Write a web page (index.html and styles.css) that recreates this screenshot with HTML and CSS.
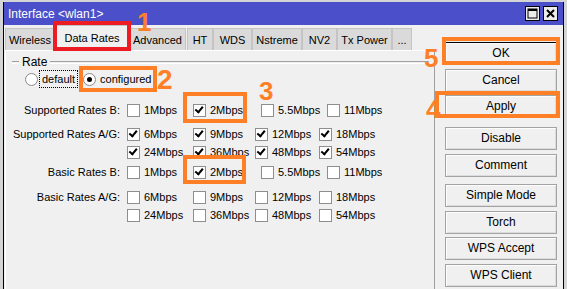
FILE: index.html
```html
<!DOCTYPE html>
<html>
  <head>
    <meta charset="UTF-8">
    <title>Interface &lt;wlan1&gt;</title>
    <link rel="stylesheet" href="styles.css">
  </head>
  <body>
    <div class="window">
      <div class="titlebar">
        <span class="title">Interface &lt;wlan1&gt;</span>
        <div class="tb-btns">
          <span class="tb-btn">
            <svg width="11" height="11" viewBox="0 0 11 11"><rect x="1" y="1" width="9" height="9" fill="none" stroke="#000" stroke-width="1"/><rect x="1" y="1" width="9" height="2" fill="#000"/></svg>
          </span>
          <span class="tb-btn">
            <svg width="11" height="11" viewBox="0 0 11 11"><path d="M2 2 L9 9 M9 2 L2 9" stroke="#000" stroke-width="2"/></svg>
          </span>
        </div>
      </div>
      <div class="main">
        <div class="left">
          <div class="tabs">
            <div class="tab t-wireless">Wireless</div>
            <div class="tab active">Data Rates</div>
            <div class="tab t-adv">Advanced</div>
            <div class="tab t-ht">HT</div>
            <div class="tab t-wds">WDS</div>
            <div class="tab t-nst">Nstreme</div>
            <div class="tab t-nv2">NV2</div>
            <div class="tab t-tx">Tx Power</div>
            <div class="tab t-more">...</div>
          </div>
          <div class="panel">
            <div class="group-title"><span>Rate</span></div>
            <div class="radios">
              <label class="radio r-default"><span class="dot"></span><span class="rtext focus">default</span></label>
              <label class="radio"><span class="dot on"></span><span class="rtext">configured</span></label>
            </div>
            <div class="rates">
              <div class="row gap-b">
                <span class="lbl">Supported Rates B:</span>
                <div class="opts cols-b">
                  <span class="cb"><span class="box"></span>1Mbps</span>
                  <span class="cb"><span class="box on"></span>2Mbps</span>
                  <span class="cb"><span class="box"></span>5.5Mbps</span>
                  <span class="cb"><span class="box"></span>11Mbps</span>
                </div>
              </div>
              <div class="row gap-ag">
                <span class="lbl">Supported Rates A/G:</span>
                <div class="opts cols-ag">
                  <span class="cb"><span class="box on"></span>6Mbps</span>
                  <span class="cb"><span class="box on"></span>9Mbps</span>
                  <span class="cb"><span class="box on"></span>12Mbps</span>
                  <span class="cb"><span class="box on"></span>18Mbps</span>
                  <span class="cb"><span class="box on"></span>24Mbps</span>
                  <span class="cb"><span class="box on"></span>36Mbps</span>
                  <span class="cb"><span class="box on"></span>48Mbps</span>
                  <span class="cb"><span class="box on"></span>54Mbps</span>
                </div>
              </div>
              <div class="row gap-basic">
                <span class="lbl">Basic Rates B:</span>
                <div class="opts cols-b">
                  <span class="cb"><span class="box"></span>1Mbps</span>
                  <span class="cb"><span class="box on"></span>2Mbps</span>
                  <span class="cb"><span class="box"></span>5.5Mbps</span>
                  <span class="cb"><span class="box"></span>11Mbps</span>
                </div>
              </div>
              <div class="row">
                <span class="lbl">Basic Rates A/G:</span>
                <div class="opts cols-ag">
                  <span class="cb"><span class="box"></span>6Mbps</span>
                  <span class="cb"><span class="box"></span>9Mbps</span>
                  <span class="cb"><span class="box"></span>12Mbps</span>
                  <span class="cb"><span class="box"></span>18Mbps</span>
                  <span class="cb"><span class="box"></span>24Mbps</span>
                  <span class="cb"><span class="box"></span>36Mbps</span>
                  <span class="cb"><span class="box"></span>48Mbps</span>
                  <span class="cb"><span class="box"></span>54Mbps</span>
                </div>
              </div>
            </div>
          </div>
        </div>
        <div class="side">
          <div class="btn default">OK</div>
          <div class="btn">Cancel</div>
          <div class="btn">Apply</div>
          <div class="btn sep-1">Disable</div>
          <div class="btn">Comment</div>
          <div class="btn sep-2">Simple Mode</div>
          <div class="btn">Torch</div>
          <div class="btn">WPS Accept</div>
          <div class="btn">WPS Client</div>
          <div class="btn"></div>
        </div>
      </div>
    </div>

    <!-- annotations drawn over the screenshot -->
    <div class="mark red m-tab"></div>
    <div class="num n1">1</div>
    <div class="mark m-conf"></div>
    <div class="num n2">2</div>
    <div class="num n3">3</div>
    <div class="mark m-sup2"></div>
    <div class="mark m-bas2"></div>
    <div class="num n4">4</div>
    <div class="mark m-apply"></div>
    <div class="num n5">5</div>
    <div class="mark m-ok"></div>
  </body>
</html>
```

FILE: styles.css
```css
body {
  margin: 0;
  background: #d4d4d4;
  font-family: "Liberation Sans", Arial, sans-serif;
  font-size: 11px;
  color: #000;
  position: relative;
  height: 289px;
  overflow: hidden;
}
.window {
  margin: 2px 0 0 3px;
  width: 559px;
  height: 300px;
  border-left: 1px solid #000;
  border-right: 1px solid #000;
  background: #f0f0f0;
}
.titlebar {
  height: 23px;
  background: #4b4fc9;
  display: flex;
  align-items: center;
  justify-content: space-between;
  padding: 0 5px 0 4px;
}
.title {
  color: #fff;
  font-size: 12px;
}
.tb-btns {
  display: flex;
  gap: 3px;
}
.tb-btn {
  width: 13px;
  height: 13px;
  border: 1px solid #000;
  background: #ececec;
  display: flex;
  align-items: center;
  justify-content: center;
}
.main {
  display: flex;
}
.left {
  width: 431px;
}
.tabs {
  display: flex;
  align-items: flex-end;
  height: 25px;
  padding-left: 1px;
}
.tab {
  height: 22px;
  line-height: 22px;
  background: #dadada;
  border: 1px solid #c4c4c4;
  border-bottom: none;
  text-align: center;
  box-sizing: border-box;
}
.tab.active {
  background: #f0f0f0;
  height: 26px;
  line-height: 24px;
  width: 74px;
  margin-bottom: -1px;
}
.t-wireless { width: 50px; }
.t-adv { width: 57px; }
.t-ht { width: 26px; margin-left: 1px; }
.t-wds { width: 39px; }
.t-nst { width: 50px; }
.t-nv2 { width: 35px; }
.t-tx { width: 55px; }
.t-more { width: 20px; }
.panel {
  margin-left: 1px;
  height: 260px;
  border-top: 1px solid #fff;
  border-left: 1px solid #fff;
  border-right: 1px solid #a0a0a0;
  padding-top: 5px;
  box-sizing: border-box;
}
.group-title {
  display: flex;
  align-items: center;
  height: 12px;
  margin: 0 5px 0 6px;
}
.group-title::before,
.group-title::after {
  content: "";
  height: 1px;
  border-top: 1px solid #a0a0a0;
  border-bottom: 1px solid #fff;
}
.group-title::before {
  width: 7px;
}
.group-title::after {
  flex: 1;
}
.group-title span {
  padding: 0 3px 0 3px;
  font-size: 12px;
}
.radios {
  display: flex;
  align-items: center;
  height: 20px;
  margin-top: 1px;
  padding-left: 19px;
}
.radio {
  display: flex;
  align-items: center;
}
.r-default {
  margin-right: 5px;
}
.dot {
  width: 11px;
  height: 11px;
  border: 1px solid #8a8a8a;
  border-radius: 50%;
  background: #fff;
  position: relative;
}
.dot.on::after {
  content: "";
  position: absolute;
  left: 3px;
  top: 3px;
  width: 5px;
  height: 5px;
  border-radius: 50%;
  background: #000;
}
.rtext {
  padding: 2px 2px;
  margin-left: 1px;
  border: 1px solid transparent;
}
.rtext.focus {
  border: 1px dotted #000;
}
.rates {
  margin-top: 12px;
}
.row {
  display: flex;
}
.gap-b { margin-bottom: 6px; }
.gap-ag { margin-bottom: 2px; }
.gap-basic { margin-bottom: 7px; }
.lbl {
  width: 114px;
  text-align: right;
  line-height: 18px;
}
.opts {
  display: grid;
  grid-auto-rows: 18px;
  margin-left: 7px;
}
.cols-b {
  grid-template-columns: 66px 68px 66px 80px;
}
.cols-ag {
  grid-template-columns: 66px 62px 64px 80px;
}
.cb {
  display: flex;
  align-items: center;
  gap: 4px;
}
.box {
  width: 11px;
  height: 11px;
  border: 1px solid #8e8e8e;
  background: #fff;
  position: relative;
}
.box.on::after {
  content: "";
  position: absolute;
  left: 2px;
  top: 0px;
  width: 3px;
  height: 6px;
  border-right: 2px solid #000;
  border-bottom: 2px solid #000;
  transform: rotate(40deg);
  transform-origin: 60% 60%;
}
.side {
  width: 128px;
  padding: 17px 0 0 10px;
  box-sizing: border-box;
  display: flex;
  flex-direction: column;
  gap: 3.5px;
}
.btn {
  width: 112px;
  height: 23px;
  flex-shrink: 0;
  line-height: 21px;
  box-sizing: border-box;
  text-align: center;
  background: #f0f0f0;
  border: 1px solid #a3a3a3;
  box-shadow: inset 1px 1px #fdfdfd, inset -1px -1px #dcdcdc;
  font-size: 12px;
}
.btn.default {
  border-color: #000 #a3a3a3 #a3a3a3 #a3a3a3;
}
.sep-1 { margin-top: 5.5px; }
.sep-2 { margin-top: 4px; }

/* annotations */
.mark {
  position: absolute;
  border: 4px solid #ff7f27;
  box-sizing: border-box;
}
.mark.red {
  border-color: #ed1c24;
}
.num {
  position: absolute;
  color: #ff7f27;
  font-weight: bold;
  font-size: 26px;
  line-height: 26px;
}
.m-tab { left: 53px; top: 21px; width: 78px; height: 30px; }
.m-conf { left: 79px; top: 66px; width: 78px; height: 26px; }
.m-sup2 { left: 183px; top: 92px; width: 64px; height: 31px; }
.m-bas2 { left: 183px; top: 155px; width: 63px; height: 29px; }
.m-apply { left: 435px; top: 91px; width: 125px; height: 27px; }
.m-ok { left: 442px; top: 37px; width: 118px; height: 28px; }
.n1 { left: 137px; top: 9px; }
.n2 { left: 157px; top: 67px; font-size: 28px; }
.n3 { left: 259px; top: 78px; }
.n4 { left: 426px; top: 96px; }
.n5 { left: 424px; top: 45px; }
```
